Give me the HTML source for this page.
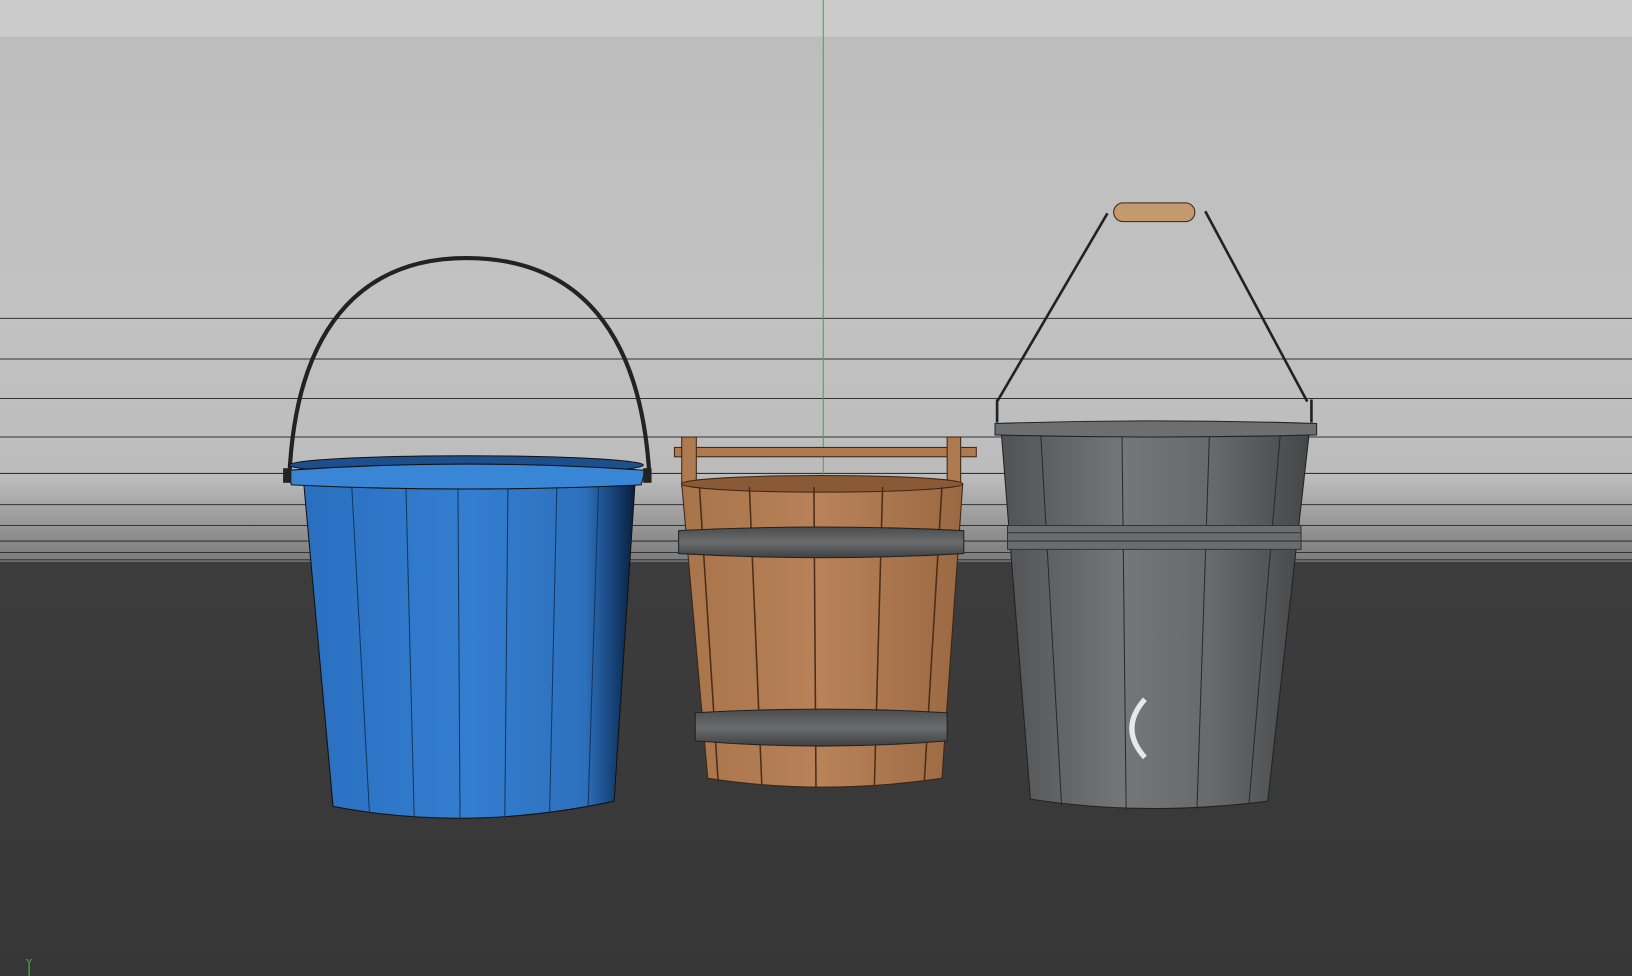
<!DOCTYPE html>
<html><head><meta charset="utf-8"><style>
html,body{margin:0;padding:0;width:1632px;height:976px;overflow:hidden;background:#3b3b3b}
svg{display:block}
</style></head><body>
<svg width="1632" height="976" viewBox="0 0 1568 938" preserveAspectRatio="none" xmlns="http://www.w3.org/2000/svg">
<defs>
<linearGradient id="wall" x1="0" y1="0" x2="0" y2="1">
<stop offset="0" stop-color="#c9c9c9"/>
<stop offset="0.06" stop-color="#bdbdbd"/>
<stop offset="0.55" stop-color="#c2c2c2"/>
<stop offset="0.85" stop-color="#bcbcbc"/>
<stop offset="1" stop-color="#7a7a7a"/>
</linearGradient>
<linearGradient id="floor" x1="0" y1="0" x2="0" y2="1">
<stop offset="0" stop-color="#3c3c3c"/>
<stop offset="1" stop-color="#373737"/>
</linearGradient>
<linearGradient id="blue" x1="0" y1="0" x2="1" y2="0">
<stop offset="0" stop-color="#2a6fc0"/>
<stop offset="0.5" stop-color="#347ed0"/>
<stop offset="0.85" stop-color="#2d70bd"/>
<stop offset="0.95" stop-color="#123a6a"/>
<stop offset="1" stop-color="#0a1f3c"/>
</linearGradient>
<linearGradient id="wood" x1="0" y1="0" x2="1" y2="0">
<stop offset="0" stop-color="#a8744a"/>
<stop offset="0.5" stop-color="#b98259"/>
<stop offset="1" stop-color="#9a6842"/>
</linearGradient>
<linearGradient id="metal" x1="0" y1="0" x2="1" y2="0">
<stop offset="0" stop-color="#505254"/>
<stop offset="0.4" stop-color="#747678"/>
<stop offset="0.7" stop-color="#66686a"/>
<stop offset="1" stop-color="#444648"/>
</linearGradient>
<linearGradient id="band" x1="0" y1="0" x2="0" y2="1">
<stop offset="0" stop-color="#4a4c4e"/>
<stop offset="0.5" stop-color="#6a6c6e"/>
<stop offset="1" stop-color="#3e4042"/>
</linearGradient>
</defs>
<rect x="0" y="0" width="1568" height="540" fill="url(#wall)"/>
<rect x="0" y="0" width="1568" height="35" fill="#cbcbcb"/>
<rect x="0" y="540" width="1568" height="398" fill="url(#floor)"/>
<g stroke="#333" stroke-width="1">
<line x1="0" y1="306" x2="1568" y2="306"/>
<line x1="0" y1="345" x2="1568" y2="345"/>
<line x1="0" y1="383" x2="1568" y2="383"/>
<line x1="0" y1="420" x2="1568" y2="420"/>
<line x1="0" y1="455" x2="1568" y2="455"/>
<line x1="0" y1="485" x2="1568" y2="485"/>
<line x1="0" y1="505" x2="1568" y2="505"/>
<line x1="0" y1="520" x2="1568" y2="520"/>
<line x1="0" y1="531" x2="1568" y2="531"/>
<line x1="0" y1="538" x2="1568" y2="538"/>
</g>
<line x1="791" y1="0" x2="791" y2="465" stroke="#3fae3f" stroke-width="1"/>

<!-- blue bucket -->
<path d="M278 458 C 285 300, 360 248, 448 248 C 540 248, 615 300, 624 458" fill="none" stroke="#222" stroke-width="4"/>
<path d="M292 466 L610 466 L590 770 Q450 800 320 775 Z" fill="url(#blue)" stroke="#111" stroke-width="1"/>
<g stroke="#14365e" stroke-width="1">
<line x1="338" y1="468" x2="355" y2="782"/><line x1="390" y1="468" x2="398" y2="788"/>
<line x1="440" y1="468" x2="442" y2="790"/><line x1="488" y1="468" x2="485" y2="788"/>
<line x1="535" y1="468" x2="528" y2="784"/><line x1="575" y1="468" x2="565" y2="778"/>
</g>
<ellipse cx="448" cy="447" rx="170" ry="9" fill="#1c4f8c" stroke="#111"/>
<path d="M276 452 Q448 440 620 452 L616 466 Q448 474 280 466 Z" fill="#3a86d6" stroke="#111" stroke-width="1"/>
<rect x="272" y="450" width="8" height="14" fill="#222"/><rect x="618" y="450" width="8" height="14" fill="#222"/>

<!-- wooden bucket -->
<rect x="648" y="430" width="290" height="9" fill="#b07a50" stroke="#3a2616"/>
<rect x="655" y="420" width="14" height="48" fill="#b07a50" stroke="#3a2616"/>
<rect x="910" y="420" width="13" height="48" fill="#b07a50" stroke="#3a2616"/>
<path d="M655 465 L925 465 L905 748 Q790 765 680 748 Z" fill="url(#wood)" stroke="#3a2616"/>
<ellipse cx="790" cy="465" rx="135" ry="8" fill="#8a5a36" stroke="#3a2616"/>
<g stroke="#4a2e1a" stroke-width="1.5">
<line x1="672" y1="468" x2="690" y2="752"/><line x1="720" y1="468" x2="732" y2="756"/>
<line x1="782" y1="468" x2="784" y2="760"/><line x1="848" y1="468" x2="840" y2="758"/>
<line x1="905" y1="468" x2="888" y2="752"/>
</g>
<path d="M652 510 Q790 503 926 510 L926 532 Q790 540 652 532 Z" fill="url(#band)" stroke="#222"/>
<path d="M668 685 Q790 678 910 685 L910 712 Q790 722 668 712 Z" fill="url(#band)" stroke="#222"/>

<!-- metal bucket -->
<path d="M958 386 L1064 205 M1158 203 L1256 386 M958 384 L958 406 M1260 384 L1260 406" fill="none" stroke="#222" stroke-width="2.5"/>
<rect x="1070" y="195" width="78" height="18" rx="9" fill="#c39a6e" stroke="#3a2616"/>
<path d="M962 415 L1258 415 L1218 770 Q1100 785 990 768 Z" fill="url(#metal)" stroke="#222"/>
<g stroke="#2a2a2a" stroke-width="1">
<line x1="1000" y1="418" x2="1020" y2="775"/><line x1="1078" y1="418" x2="1082" y2="780"/>
<line x1="1162" y1="418" x2="1150" y2="778"/><line x1="1230" y1="418" x2="1200" y2="772"/>
</g>
<path d="M956 407 Q1110 402 1265 407 L1265 418 Q1110 422 956 418 Z" fill="#6c6e70" stroke="#222"/>
<path d="M968 505 L1250 505 L1250 528 L968 528 Z" fill="#6a6c6e" stroke="#333"/>
<g stroke="#333"><line x1="968" y1="512" x2="1250" y2="512"/><line x1="968" y1="520" x2="1250" y2="520"/></g>
<path d="M1100 672 Q1075 700 1100 728" fill="none" stroke="#e8e8e8" stroke-width="5"/>
<text x="25" y="928" fill="#3fcf3f" font-family="Liberation Sans, sans-serif" font-size="9">Y</text>
<line x1="28" y1="928" x2="28" y2="938" stroke="#3fcf3f"/>
</svg>
</body></html>
